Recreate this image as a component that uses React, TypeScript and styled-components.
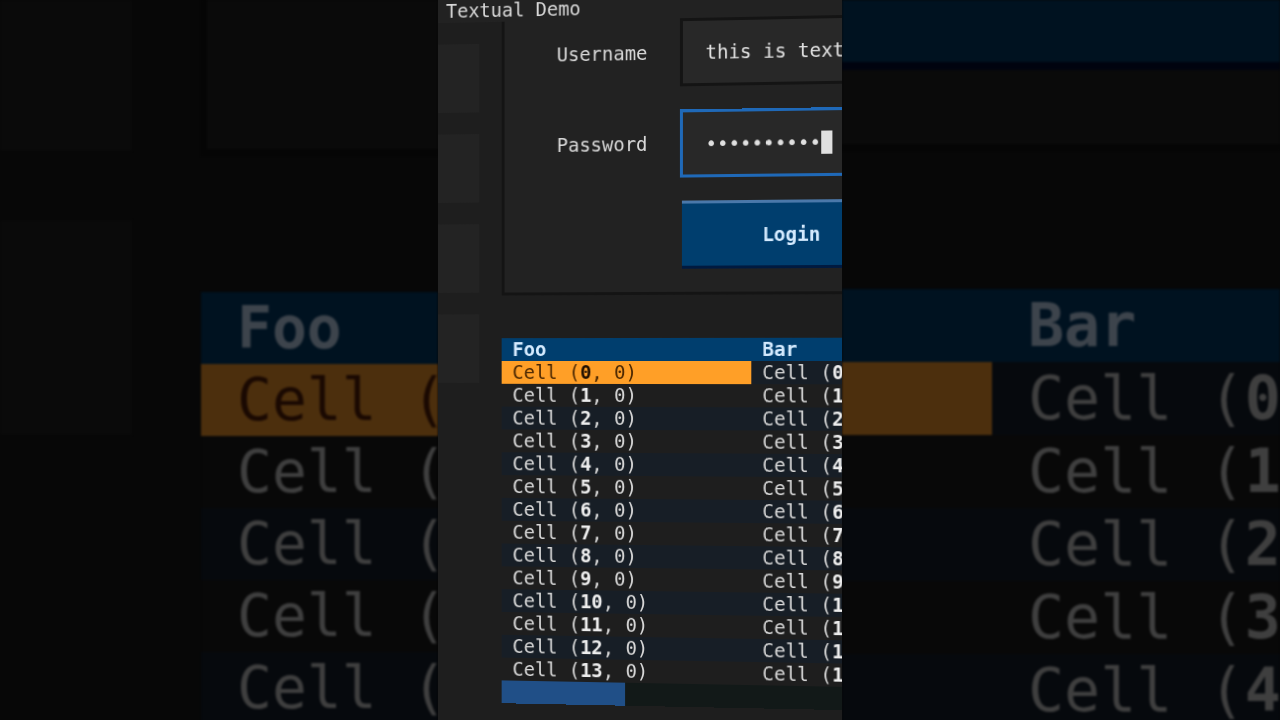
import React from "react";
import styled, { createGlobalStyle, css } from "styled-components";

const mono = `"DejaVu Sans Mono", "Liberation Mono", monospace`;

const GlobalStyle = createGlobalStyle`
  * { box-sizing: border-box; }
  body { margin: 0; background: #070707; }
`;

const Page = styled.main`
  display: flex;
  height: 100vh;
  overflow: hidden;
  font-family: ${mono};
`;

/* Dimmed, enlarged sides */

const Side = styled.section`
  flex: 1;
  min-width: 0;
  overflow: hidden;
  background: #070707;
`;

const Soft = styled.div`
  display: flex;
  height: 100%;
  filter: blur(1px);
`;

const DimCards = styled.div`
  flex: 1;
  display: flex;
  flex-direction: column;
  gap: 69px;
`;

const DimCard = styled.div<{ $height: number }>`
  flex: none;
  height: ${(p) => p.$height}px;
  background: #0a0a0a;
`;

const DimLeftColumn = styled.div`
  flex: none;
  width: 237px;
  margin-left: 69px;
`;

const DimRightColumn = styled.div`
  flex: 1;
  min-width: 0;
`;

const DimFrame = styled.div`
  height: 156px;
  margin-bottom: 136px;
  background: #0a0a0a;
  border-left: 6px solid #050505;
  border-bottom: 7px solid #050505;
`;

const DimButton = styled.div`
  height: 70px;
  background: #001220;
  border-bottom: 8px solid #00030f;
`;

const DimFooter = styled.div`
  height: 81px;
  margin-bottom: 138px;
  background: #0a0a0a;
  border-bottom: 7px solid #050505;
`;

const DimTable = styled.table<{ $size: number; $row: number }>`
  width: 100%;
  table-layout: fixed;
  border-collapse: collapse;
  font-size: ${(p) => p.$size}px;
  line-height: ${(p) => p.$row}px;
  white-space: pre;

  th,
  td {
    padding: 0 0 0 36px;
    overflow: hidden;
    text-align: left;
  }
`;

const DimHead = styled.tr`
  background: #001220;
  color: #3d444c;
`;

const DimRow = styled.tr<{ $striped: boolean }>`
  background: ${(p) => (p.$striped ? "#06090d" : "#080808")};
  color: #3f3f3f;
`;

const DimSelected = styled.td`
  background: #4c2f0d;
  color: #1a0902;
`;

const Narrow = styled.col`
  width: 150px;
`;

/* Sharp, tilted terminal in the middle */

const Viewport = styled.section`
  flex: none;
  height: 100%;
  aspect-ratio: 101 / 180;
  overflow: hidden;
  background: #1e1e1e;
`;

const Terminal = styled.div`
  margin: -8px -80px -8px -8px;
  transform-origin: 210px 368px;
  transform: perspective(1500px) rotateY(-5deg);
  font-size: 19px;
  line-height: 23px;
  color: #d8d8d8;
`;

const TitleBar = styled.header`
  height: 27px;
  padding: 4px 0 0 13px;
  background: #222222;
`;

const Title = styled.h1`
  margin: 0;
  font-size: 19px;
  font-weight: 400;
`;

const Body = styled.div`
  display: flex;
  gap: 23px;
`;

const Sidebar = styled.aside`
  flex: none;
  width: 47px;
  display: flex;
  flex-direction: column;
  gap: 22px;
  padding-top: 22px;
`;

const Card = styled.div`
  height: 69px;
  background: #232323;
`;

const Content = styled.div`
  flex: 1;
  min-width: 0;
`;

const LoginForm = styled.form`
  display: grid;
  grid-template-columns: auto 1fr;
  gap: 23px 32px;
  align-items: center;
  margin-bottom: 43px;
  padding: 0 0 23px 53px;
  background: #222222;
  border-left: 3px solid #141414;
  border-bottom: 3px solid #141414;
`;

const Field = styled.div<{ $focused?: boolean }>`
  display: flex;
  align-items: center;
  height: 68px;
  padding-left: 23px;
  background: #282828;
  border: 3px solid ${(p) => (p.$focused ? "#1f69b8" : "#141414")};
  border-right: 0;
`;

const field = css`
  padding: 0;
  border: 0;
  outline: 0;
  background: none;
  font: inherit;
  color: #e0e0e0;
`;

const TextInput = styled.input`
  ${field}
  flex: 1;
  min-width: 0;
`;

const PasswordInput = styled.input`
  ${field}
  width: 10ch;
`;

const Caret = styled.span`
  width: 1ch;
  height: 23px;
  background: #e0e0e0;
`;

const LoginButton = styled.button`
  grid-column: 2;
  width: 218px;
  height: 68px;
  margin-left: 2px;
  padding: 0;
  border: 0;
  border-top: 3px solid #4a78aa;
  border-bottom: 3px solid #001a40;
  background: #003e6e;
  color: #d5ebff;
  font: inherit;
  font-weight: 700;
`;

const DataTable = styled.table`
  width: 100%;
  table-layout: fixed;
  border-collapse: collapse;
  white-space: pre;

  th,
  td {
    height: 23px;
    padding: 0 0 0 11px;
    text-align: left;
  }
`;

const FirstColumn = styled.col`
  width: 251px;
`;

const HeadRow = styled.tr`
  background: #003e6e;
  color: #d5ebff;
`;

const Row = styled.tr<{ $striped: boolean }>`
  background: ${(p) => (p.$striped ? "#171e26" : "#1e1e1e")};
`;

const Cell = styled.td<{ $selected?: boolean }>`
  ${(p) => p.$selected && "background: #ff9f27; color: #4a2600;"}

  b {
    color: ${(p) => (p.$selected ? "#221000" : "#ededed")};
  }
`;

const ScrollTrack = styled.div`
  height: 23px;
  background: #121918;
`;

const ScrollThumb = styled.div`
  width: 125px;
  height: 100%;
  background: #204f87;
`;

const rows = Array.from({ length: 14 }, (_, i) => String(i));
const dimRows = ["1", "2", "3", "4"];

function LeftSide() {
  return (
    <Side aria-hidden="true">
      <Soft>
        <DimCards>
          <DimCard $height={151} />
          <DimCard $height={215} />
        </DimCards>
        <DimLeftColumn>
          <DimFrame />
          <DimTable $size={58} $row={72}>
            <tbody>
              <DimHead>
                <th>Foo</th>
              </DimHead>
              <tr>
                <DimSelected>Cell (</DimSelected>
              </tr>
              {dimRows.map((n, i) => (
                <DimRow key={n} $striped={i % 2 === 1}>
                  <td>Cell (</td>
                </DimRow>
              ))}
            </tbody>
          </DimTable>
        </DimLeftColumn>
      </Soft>
    </Side>
  );
}

function RightSide() {
  return (
    <Side aria-hidden="true">
      <Soft>
        <DimRightColumn>
          <DimButton />
          <DimFooter />
          <DimTable $size={60} $row={73}>
            <colgroup>
              <Narrow />
              <col />
            </colgroup>
            <tbody>
              <DimHead>
                <th />
                <th>Bar</th>
              </DimHead>
              <DimRow $striped>
                <DimSelected />
                <td>
                  Cell (<b>0</b>
                </td>
              </DimRow>
              {dimRows.map((n, i) => (
                <DimRow key={n} $striped={i % 2 === 1}>
                  <td />
                  <td>
                    Cell (<b>{n}</b>
                  </td>
                </DimRow>
              ))}
            </tbody>
          </DimTable>
        </DimRightColumn>
      </Soft>
    </Side>
  );
}

export default function App() {
  return (
    <>
      <GlobalStyle />
      <Page>
        <LeftSide />
        <Viewport>
          <Terminal>
            <TitleBar>
              <Title>Textual Demo</Title>
            </TitleBar>
            <Body>
              <Sidebar>
                <Card />
                <Card />
                <Card />
                <Card />
              </Sidebar>
              <Content>
                <LoginForm onSubmit={(e) => e.preventDefault()}>
                  <label htmlFor="username">Username</label>
                  <Field>
                    <TextInput id="username" defaultValue="this is text" />
                  </Field>
                  <label htmlFor="password">Password</label>
                  <Field $focused>
                    <PasswordInput
                      id="password"
                      type="password"
                      defaultValue="0123456789"
                    />
                    <Caret />
                  </Field>
                  <LoginButton type="submit">Login</LoginButton>
                </LoginForm>
                <DataTable>
                  <colgroup>
                    <FirstColumn />
                    <col />
                  </colgroup>
                  <thead>
                    <HeadRow>
                      <th>Foo</th>
                      <th>Bar</th>
                    </HeadRow>
                  </thead>
                  <tbody>
                    {rows.map((n, i) => (
                      <Row key={n} $striped={i % 2 === 0}>
                        <Cell $selected={i === 0}>
                          Cell (<b>{n}</b>, 0)
                        </Cell>
                        <Cell>
                          Cell (<b>{n.charAt(0)}</b>
                        </Cell>
                      </Row>
                    ))}
                  </tbody>
                </DataTable>
                <ScrollTrack>
                  <ScrollThumb />
                </ScrollTrack>
              </Content>
            </Body>
          </Terminal>
        </Viewport>
        <RightSide />
      </Page>
    </>
  );
}
